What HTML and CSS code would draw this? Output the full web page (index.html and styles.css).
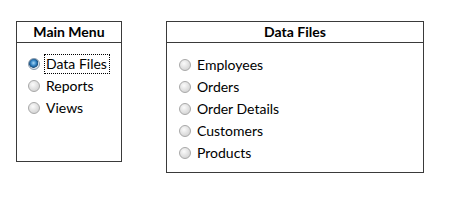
FILE: index.html
```html
<!DOCTYPE html>
<html lang="en">
<head>
    <meta charset="UTF-8">
    <title>Menu</title>
    <link rel="stylesheet" href="styles.css">
</head>
<body>
<div class="wrap">
    <div class="panel menu">
        <div class="title">Main Menu</div>
        <ul>
            <li><label class="focus"><input type="radio" name="menu" checked><span>Data Files</span></label></li>
            <li><label><input type="radio" name="menu"><span>Reports</span></label></li>
            <li><label><input type="radio" name="menu"><span>Views</span></label></li>
        </ul>
    </div>
    <div class="panel files">
        <div class="title">Data Files</div>
        <ul>
            <li><label><input type="radio" name="file"><span>Employees</span></label></li>
            <li><label><input type="radio" name="file"><span>Orders</span></label></li>
            <li><label><input type="radio" name="file"><span>Order Details</span></label></li>
            <li><label><input type="radio" name="file"><span>Customers</span></label></li>
            <li><label><input type="radio" name="file"><span>Products</span></label></li>
        </ul>
    </div>
</div>
</body>
</html>
```
FILE: styles.css
```css
*{
    margin: 0;
    padding: 0;
    list-style: none;
    box-sizing: border-box;
}
body{
    background: #fff;
    font-family: Lato, "Open Sans", sans-serif;
    color: #000;
}
.wrap{
    display: flex;
    align-items: flex-start;
    gap: 44px;
    padding: 21px 0 0 16px;
}
.panel{
    border: 1px solid #3a3a3a;
}
.menu{
    width: 106px;
    height: 141px;
}
.files{
    width: 258px;
    height: 152px;
}
.title{
    height: 21px;
    line-height: 20px;
    border-bottom: 1px solid #3a3a3a;
    text-align: center;
    font-weight: bold;
    font-size: 14px;
}
.menu ul{
    padding: 10px 0 0 11px;
}
.files ul{
    padding: 11px 0 0 12px;
}
li{
    height: 22px;
    display: flex;
    align-items: center;
}
label{
    display: flex;
    align-items: center;
    font-size: 14px;
    height: 20px;
}
label span{
    padding: 0 2px 0 1px;
    line-height: 18px;
    border: 1px dotted transparent;
}
label.focus span{
    border-color: #000;
}
input{
    appearance: none;
    width: 12px;
    height: 12px;
    margin-right: 4px;
    border-radius: 50%;
    border: 1px solid #a8a8a8;
    background: radial-gradient(circle at 40% 35%, #fbfbfb 0, #e4e4e4 45%, #cacaca 100%);
}
input:checked{
    border-color: #8798aa;
    background: radial-gradient(circle at 45% 40%, #a6d8f7 0, #2f7fc0 35%, #1b4f7d 55%, #e2e8ef 62%, #c9d2dc 100%);
}
```
